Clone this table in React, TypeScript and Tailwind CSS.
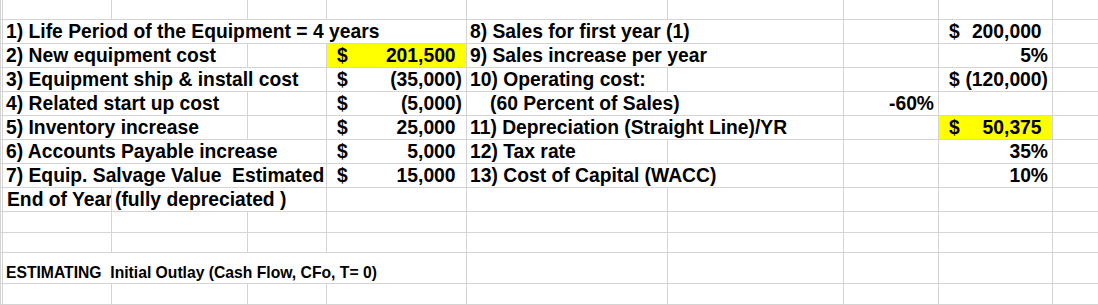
import React from "react";

type Seg = {
  span: number;
  kind?: "text" | "acct" | "num" | "clip";
  text?: string;
  paren?: boolean;
  yellow?: boolean;
  indent?: boolean;
  small?: boolean;
};

const COLS = [109, 136, 79, 140, 201, 176, 95, 114, 45];

function Cell({ seg, start }: { seg: Seg; start: number }) {
  let w = 0;
  for (let i = start; i < start + seg.span; i++) w += COLS[i];
  const last = start + seg.span === COLS.length;
  const base =
    "h-full flex items-end shrink-0 whitespace-pre " +
    (last ? "" : "border-r border-[#d4d4d4] ") +
    (seg.yellow ? "bg-[#ffff00] " : "");
  let inner: React.ReactNode = null;
  if (seg.kind === "text") {
    inner = (
      <span
        className={
          (seg.small ? "text-[15.7px] leading-[18px] pb-[1px] " : "text-[19.3px] leading-[22px] ") +
          (seg.indent ? "pl-[23px]" : "pl-[3px]")
        }
      >
        {seg.text}
      </span>
    );
  } else if (seg.kind === "clip") {
    inner = (
      <span className="text-[19.3px] leading-[22px] pl-[4px] overflow-hidden w-full">{seg.text}</span>
    );
  } else if (seg.kind === "acct") {
    inner = (
      <span className="text-[19.3px] leading-[22px] flex w-full justify-between pl-[10px] pr-[4px]">
        <span>$</span>
        <span>
          {seg.text}
          {seg.paren ? null : <span className="invisible">)</span>}
        </span>
      </span>
    );
  } else if (seg.kind === "num") {
    inner = (
      <span className="text-[19.3px] leading-[22px] w-full text-right pr-[4px]">{seg.text}</span>
    );
  }
  return (
    <div className={base} style={{ width: w }}>
      {inner}
    </div>
  );
}

function Row({ h, segs }: { h: string; segs: Seg[] }) {
  let idx = 0;
  const cells = segs.map((s, i) => {
    const st = idx;
    idx += s.span;
    return <Cell key={i} seg={s} start={st} />;
  });
  return (
    <div className={"flex border-b border-[#d4d4d4] " + h}>
      <div className="w-[3px] h-full border-l border-r border-[#d4d4d4] shrink-0" />
      {cells}
    </div>
  );
}

const e = (span = 1): Seg => ({ span });
const empty = [e(), e(), e(), e(), e(), e(), e(), e(), e()];

export default function App() {
  return (
    <div
      className="w-[1098px] h-[305px] bg-white overflow-hidden font-bold text-black"
      style={{ fontFamily: '"Liberation Sans", Arial, sans-serif' }}
    >
      <Row h="h-[20px]" segs={empty} />
      <Row
        h="h-[24px]"
        segs={[
          { span: 4, kind: "text", text: "1) Life Period of the Equipment = 4 years" },
          { span: 2, kind: "text", text: "8) Sales for first year (1)" },
          e(),
          { span: 1, kind: "acct", text: "200,000" },
          e(),
        ]}
      />
      <Row
        h="h-[24px]"
        segs={[
          { span: 2, kind: "text", text: "2) New equipment cost" },
          e(),
          { span: 1, kind: "acct", text: "201,500", yellow: true },
          { span: 2, kind: "text", text: "9) Sales increase per year" },
          e(),
          { span: 1, kind: "num", text: "5%" },
          e(),
        ]}
      />
      <Row
        h="h-[24px]"
        segs={[
          { span: 3, kind: "text", text: "3) Equipment ship & install cost" },
          { span: 1, kind: "acct", text: "(35,000)", paren: true },
          { span: 1, kind: "text", text: "10) Operating cost:" },
          e(),
          e(),
          { span: 1, kind: "acct", text: "(120,000)", paren: true },
          e(),
        ]}
      />
      <Row
        h="h-[24px]"
        segs={[
          { span: 2, kind: "text", text: "4) Related start up cost" },
          e(),
          { span: 1, kind: "acct", text: "(5,000)", paren: true },
          { span: 2, kind: "text", text: "(60 Percent of Sales)", indent: true },
          { span: 1, kind: "num", text: "-60%" },
          e(),
          e(),
        ]}
      />
      <Row
        h="h-[24px]"
        segs={[
          { span: 2, kind: "text", text: "5) Inventory increase" },
          e(),
          { span: 1, kind: "acct", text: "25,000" },
          { span: 2, kind: "text", text: "11) Depreciation (Straight Line)/YR" },
          e(),
          { span: 1, kind: "acct", text: "50,375", yellow: true },
          e(),
        ]}
      />
      <Row
        h="h-[24px]"
        segs={[
          { span: 3, kind: "text", text: "6) Accounts Payable increase" },
          { span: 1, kind: "acct", text: "5,000" },
          { span: 1, kind: "text", text: "12) Tax rate" },
          e(),
          e(),
          { span: 1, kind: "num", text: "35%" },
          e(),
        ]}
      />
      <Row
        h="h-[24px]"
        segs={[
          { span: 3, kind: "text", text: "7) Equip. Salvage Value  Estimated" },
          { span: 1, kind: "acct", text: "15,000" },
          { span: 2, kind: "text", text: "13) Cost of Capital (WACC)" },
          e(),
          { span: 1, kind: "num", text: "10%" },
          e(),
        ]}
      />
      <Row
        h="h-[24px]"
        segs={[
          { span: 1, kind: "clip", text: "End of Year" },
          { span: 2, kind: "text", text: "(fully depreciated )" },
          e(),
          e(),
          e(),
          e(),
          e(),
          e(),
        ]}
      />
      <Row h="h-[21px]" segs={empty} />
      <Row h="h-[20px]" segs={empty} />
      <Row
        h="h-[31px]"
        segs={[
          { span: 4, kind: "text", text: "ESTIMATING  Initial Outlay (Cash Flow, CFo, T= 0)", small: true },
          e(),
          e(),
          e(),
          e(),
          e(),
        ]}
      />
      <Row h="h-[21px]" segs={empty} />
    </div>
  );
}
